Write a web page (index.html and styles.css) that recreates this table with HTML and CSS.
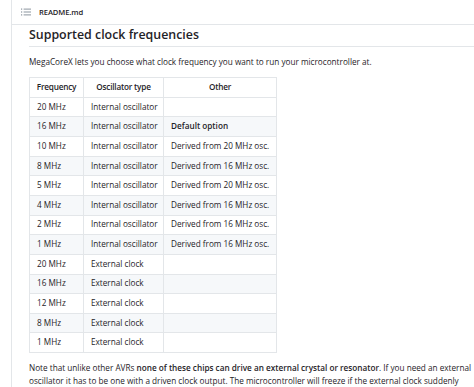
FILE: index.html
```html
<!DOCTYPE html>
<html lang="en">
<head>
    <meta charset="UTF-8">
    <meta name="viewport" content="width=device-width, initial-scale=1.0">
    <title>README.md</title>
    <link rel="stylesheet" href="styles.css">
</head>
<body>
    <div class="file">
        <div class="file-header">
            <svg class="list-icon" width="10" height="8" viewBox="0 0 10 8">
                <rect x="0" y="0.5" width="1.2" height="1.2" fill="#8c959f"/>
                <rect x="0" y="3.4" width="1.2" height="1.2" fill="#8c959f"/>
                <rect x="0" y="6.3" width="1.2" height="1.2" fill="#8c959f"/>
                <rect x="2.6" y="0.6" width="7.4" height="1" fill="#8c959f"/>
                <rect x="2.6" y="3.5" width="7.4" height="1" fill="#8c959f"/>
                <rect x="2.6" y="6.4" width="7.4" height="1" fill="#8c959f"/>
            </svg>
            <span class="file-name">README.md</span>
        </div>

        <div class="markdown-body">
            <h2>Supported clock frequencies</h2>
            <p>MegaCoreX lets you choose what clock frequency you want to run your microcontroller at.</p>

            <table>
                <thead>
                    <tr>
                        <th class="col-freq">Frequency</th>
                        <th class="col-osc">Oscillator type</th>
                        <th class="col-other">Other</th>
                    </tr>
                </thead>
                <tbody>
                    <tr><td>20 MHz</td><td>Internal oscillator</td><td></td></tr>
                    <tr><td>16 MHz</td><td>Internal oscillator</td><td><strong>Default option</strong></td></tr>
                    <tr><td>10 MHz</td><td>Internal oscillator</td><td>Derived from 20 MHz osc.</td></tr>
                    <tr><td>8 MHz</td><td>Internal oscillator</td><td>Derived from 16 MHz osc.</td></tr>
                    <tr><td>5 MHz</td><td>Internal oscillator</td><td>Derived from 20 MHz osc.</td></tr>
                    <tr><td>4 MHz</td><td>Internal oscillator</td><td>Derived from 16 MHz osc.</td></tr>
                    <tr><td>2 MHz</td><td>Internal oscillator</td><td>Derived from 16 MHz osc.</td></tr>
                    <tr><td>1 MHz</td><td>Internal oscillator</td><td>Derived from 16 MHz osc.</td></tr>
                    <tr><td>20 MHz</td><td>External clock</td><td></td></tr>
                    <tr><td>16 MHz</td><td>External clock</td><td></td></tr>
                    <tr><td>12 MHz</td><td>External clock</td><td></td></tr>
                    <tr><td>8 MHz</td><td>External clock</td><td></td></tr>
                    <tr><td>1 MHz</td><td>External clock</td><td></td></tr>
                </tbody>
            </table>

            <p class="note">Note that unlike other AVRs <strong>none of these chips can drive an external crystal or resonator</strong>. If you need an external<br>oscillator it has to be one with a driven clock output. The microcontroller will freeze if the external clock suddenly</p>
        </div>
    </div>
</body>
</html>
```

FILE: styles.css
```css
* {
    margin: 0;
    padding: 0;
    box-sizing: border-box;
}

html, body {
    background: #ffffff;
    overflow: hidden;
}

body {
    font-family: "Open Sans", "Noto Sans", Arial, sans-serif;
    font-size: 8.2px;
    line-height: 12.9px;
    color: #1f2328;
}

.file {
    margin-left: 11px;
    border-left: 1px solid #e3e6e9;
    min-height: 387px;
    width: 600px;
}

.file-header {
    height: 25px;
    display: flex;
    align-items: center;
    padding-left: 9px;
    border-bottom: 1px solid #e3e6e9;
}

.list-icon {
    margin-right: 8px;
}

.file-name {
    font-size: 7.6px;
    font-weight: 600;
    color: #1f2328;
    letter-spacing: -0.1px;
}

.markdown-body {
    padding-left: 17px;
}

.markdown-body h2 {
    font-size: 12.4px;
    line-height: 16px;
    font-weight: 600;
    margin-top: 2px;
    padding-bottom: 3px;
    border-bottom: 1px solid #e3e6e9;
    width: 445px;
}

.markdown-body p {
    margin: 8.6px 0;
    white-space: nowrap;
}

.markdown-body strong {
    font-weight: 600;
}

table {
    border-collapse: collapse;
    border-spacing: 0;
    table-layout: fixed;
    width: 247px;
}

th, td {
    border: 1px solid #e3e6e9;
    padding: 0 7px;
    height: 19.65px;
    white-space: nowrap;
    overflow: visible;
}

th {
    font-weight: 600;
    text-align: center;
    letter-spacing: -0.2px;
}

td {
    text-align: left;
}

.col-freq {
    width: 54px;
    padding: 0 5px;
}

.col-osc {
    width: 80px;
}

.col-other {
    width: 113px;
}

tbody tr:nth-child(even) {
    background: #f6f8fa;
}
```
